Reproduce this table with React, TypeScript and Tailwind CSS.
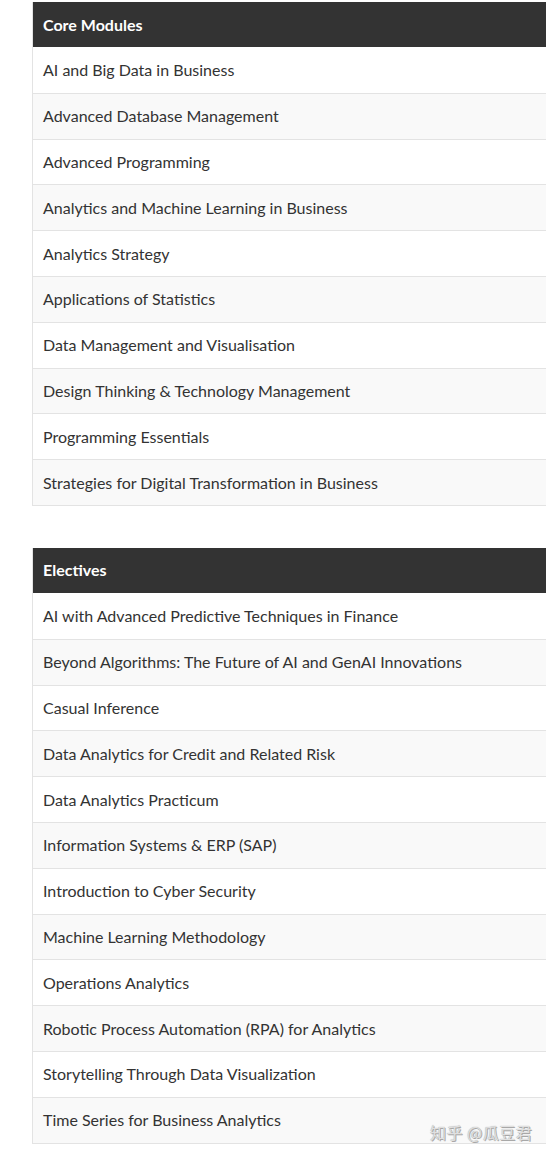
const core = [
  'AI and Big Data in Business',
  'Advanced Database Management',
  'Advanced Programming',
  'Analytics and Machine Learning in Business',
  'Analytics Strategy',
  'Applications of Statistics',
  'Data Management and Visualisation',
  'Design Thinking & Technology Management',
  'Programming Essentials',
  'Strategies for Digital Transformation in Business',
];

const electives = [
  'AI with Advanced Predictive Techniques in Finance',
  'Beyond Algorithms: The Future of AI and GenAI Innovations',
  'Casual Inference',
  'Data Analytics for Credit and Related Risk',
  'Data Analytics Practicum',
  'Information Systems & ERP (SAP)',
  'Introduction to Cyber Security',
  'Machine Learning Methodology',
  'Operations Analytics',
  'Robotic Process Automation (RPA) for Analytics',
  'Storytelling Through Data Visualization',
  'Time Series for Business Analytics',
];

function ModuleTable({ title, items }: { title: string; items: string[] }) {
  return (
    <div className="border-l border-b border-[#e3e3e3]">
      <div className="h-[45px] bg-[#333333] flex items-center px-[10px] text-white font-bold text-[16px]">
        {title}
      </div>
      {items.map((item, i) => (
        <div
          key={item}
          className={`h-[45.8px] flex items-center px-[10px] text-[16px] text-[#333333] ${
            i > 0 ? 'border-t border-[#e3e3e3]' : ''
          } ${i % 2 === 1 ? 'bg-[#f9f9f9]' : 'bg-white'}`}
        >
          {item}
        </div>
      ))}
    </div>
  );
}

export default function App() {
  return (
    <div
      className="relative w-[546px] h-[1155px] bg-white overflow-hidden pl-8 pt-[2px]"
      style={{ fontFamily: 'Lato, "Noto Sans", sans-serif' }}
    >
      <div className="w-[530px] flex flex-col gap-[42px]">
        <ModuleTable title="Core Modules" items={core} />
        <ModuleTable title="Electives" items={electives} />
      </div>
      <div
        className="absolute left-[430px] top-[1120px] text-[16px] text-[#e0e0e0] tracking-[0.5px]"
        style={{
          fontFamily: '"Noto Sans CJK SC", sans-serif',
          textShadow: '0 0 1px #999, 1px 1px 0 #aaa',
        }}
      >
        知乎 @瓜豆君
      </div>
    </div>
  );
}
